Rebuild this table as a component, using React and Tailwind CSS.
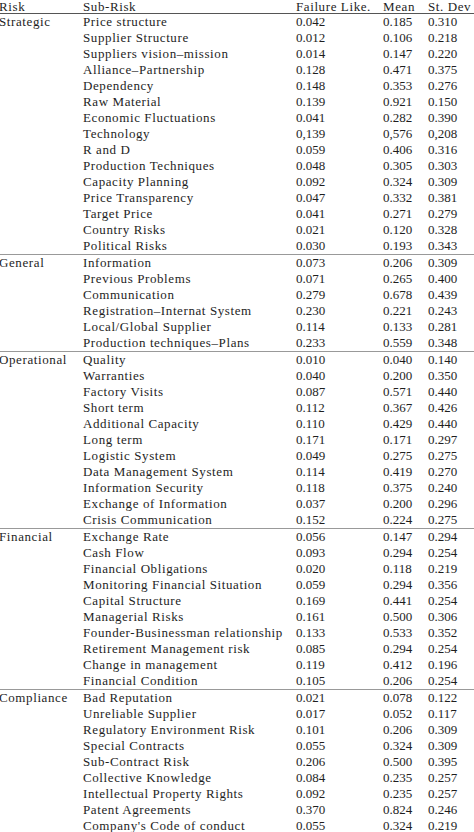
import React from 'react'

const groups = [
  {
    risk: 'Strategic',
    rows: [
      ['Price structure', '0.042', '0.185', '0.310'],
      ['Supplier Structure', '0.012', '0.106', '0.218'],
      ['Suppliers vision–mission', '0.014', '0.147', '0.220'],
      ['Alliance–Partnership', '0.128', '0.471', '0.375'],
      ['Dependency', '0.148', '0.353', '0.276'],
      ['Raw Material', '0.139', '0.921', '0.150'],
      ['Economic Fluctuations', '0.041', '0.282', '0.390'],
      ['Technology', '0,139', '0,576', '0,208'],
      ['R and D', '0.059', '0.406', '0.316'],
      ['Production Techniques', '0.048', '0.305', '0.303'],
      ['Capacity Planning', '0.092', '0.324', '0.309'],
      ['Price Transparency', '0.047', '0.332', '0.381'],
      ['Target Price', '0.041', '0.271', '0.279'],
      ['Country Risks', '0.021', '0.120', '0.328'],
      ['Political Risks', '0.030', '0.193', '0.343'],
    ],
  },
  {
    risk: 'General',
    rows: [
      ['Information', '0.073', '0.206', '0.309'],
      ['Previous Problems', '0.071', '0.265', '0.400'],
      ['Communication', '0.279', '0.678', '0.439'],
      ['Registration–Internat System', '0.230', '0.221', '0.243'],
      ['Local/Global Supplier', '0.114', '0.133', '0.281'],
      ['Production techniques–Plans', '0.233', '0.559', '0.348'],
    ],
  },
  {
    risk: 'Operational',
    rows: [
      ['Quality', '0.010', '0.040', '0.140'],
      ['Warranties', '0.040', '0.200', '0.350'],
      ['Factory Visits', '0.087', '0.571', '0.440'],
      ['Short term', '0.112', '0.367', '0.426'],
      ['Additional Capacity', '0.110', '0.429', '0.440'],
      ['Long term', '0.171', '0.171', '0.297'],
      ['Logistic System', '0.049', '0.275', '0.275'],
      ['Data Management System', '0.114', '0.419', '0.270'],
      ['Information Security', '0.118', '0.375', '0.240'],
      ['Exchange of Information', '0.037', '0.200', '0.296'],
      ['Crisis Communication', '0.152', '0.224', '0.275'],
    ],
  },
  {
    risk: 'Financial',
    rows: [
      ['Exchange Rate', '0.056', '0.147', '0.294'],
      ['Cash Flow', '0.093', '0.294', '0.254'],
      ['Financial Obligations', '0.020', '0.118', '0.219'],
      ['Monitoring Financial Situation', '0.059', '0.294', '0.356'],
      ['Capital Structure', '0.169', '0.441', '0.254'],
      ['Managerial Risks', '0.161', '0.500', '0.306'],
      ['Founder-Businessman relationship', '0.133', '0.533', '0.352'],
      ['Retirement Management risk', '0.085', '0.294', '0.254'],
      ['Change in management', '0.119', '0.412', '0.196'],
      ['Financial Condition', '0.105', '0.206', '0.254'],
    ],
  },
  {
    risk: 'Compliance',
    rows: [
      ['Bad Reputation', '0.021', '0.078', '0.122'],
      ['Unreliable Supplier', '0.017', '0.052', '0.117'],
      ['Regulatory Environment Risk', '0.101', '0.206', '0.309'],
      ['Special Contracts', '0.055', '0.324', '0.309'],
      ['Sub-Contract Risk', '0.206', '0.500', '0.395'],
      ['Collective Knowledge', '0.084', '0.235', '0.257'],
      ['Intellectual Property Rights', '0.092', '0.235', '0.257'],
      ['Patent Agreements', '0.370', '0.824', '0.246'],
      ["Company's Code of conduct", '0.055', '0.324', '0.219'],
    ],
  },
]

const cols = 'grid grid-cols-[84px_213px_87px_45px_1fr]'

export default function App() {
  return (
    <div className="w-[474px] h-[832px] overflow-hidden bg-white text-[#1e1e1e] text-[13px] leading-[16px] font-['Liberation_Serif',serif]">
      <div className="-ml-[1px]">
        <div className={`${cols} h-[14px] items-end leading-[14px] tracking-[0.6px] border-b-[1.5px] border-[#555]`}>
          <div>Risk</div>
          <div>Sub-Risk</div>
          <div>Failure Like.</div>
          <div>Mean</div>
          <div className="whitespace-nowrap">St. Dev</div>
        </div>
        {groups.map((g, gi) => (
          <div key={g.risk} className={gi > 0 ? 'border-t border-[#999]' : ''}>
            {g.rows.map((r, i) => (
              <div key={r[0]} className={`${cols} h-[16px] items-center whitespace-nowrap`}>
                <div className="tracking-[0.6px]">{i === 0 ? g.risk : ''}</div>
                <div className="tracking-[0.6px]">{r[0]}</div>
                <div>{r[1]}</div>
                <div>{r[2]}</div>
                <div>{r[3]}</div>
              </div>
            ))}
          </div>
        ))}
      </div>
    </div>
  )
}
